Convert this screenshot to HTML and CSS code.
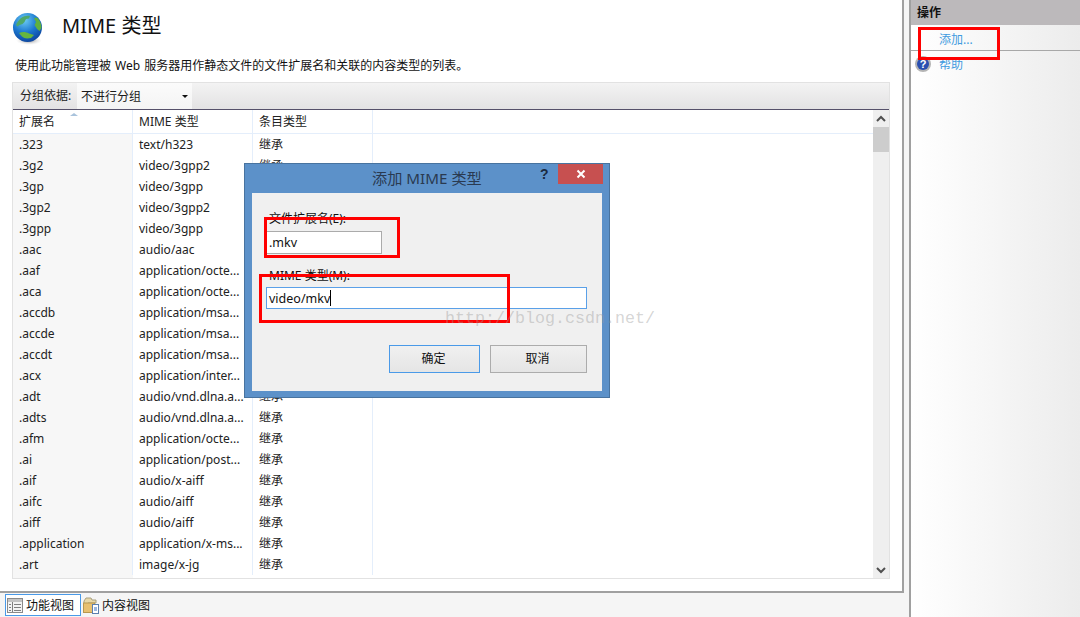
FILE: index.html
```html
<!DOCTYPE html>
<html lang="zh-CN">
<head>
<meta charset="utf-8">
<title>MIME 类型</title>
<link rel="stylesheet" href="styles.css">
</head>
<body>
<div class="app">
  <div class="left">
    <main class="main">
      <header class="head">
        <svg class="globe" width="30" height="32" viewBox="0 0 30 32">
          <defs>
            <radialGradient id="sea" cx="0.4" cy="0.25" r="0.85">
              <stop offset="0" stop-color="#6ccbf2"/>
              <stop offset="0.5" stop-color="#1c78d0"/>
              <stop offset="1" stop-color="#0a3a94"/>
            </radialGradient>
            <radialGradient id="shadow" cx="0.5" cy="0.5" r="0.5">
              <stop offset="0" stop-color="#888"/>
              <stop offset="1" stop-color="#ddd" stop-opacity="0"/>
            </radialGradient>
          </defs>
          <ellipse cx="16" cy="27.500" rx="13" ry="4.500" fill="url(#shadow)"/>
          <circle cx="14.500" cy="14.500" r="14.500" fill="url(#sea)"/>
          <path d="M8 5c3-2 6-2.500 9-2l-1 2.500-3 .6-1.500 3-2 2-3 .9-2 1.500-1.500-1.500C4 9.500 6 6.500 8 5z" fill="#4fa86a"/>
          <path d="M21 5l3-.5c3 3 4.500 6.500 4.500 10.500l-2 3-2.500-2-2.500-4 1.500-3z" fill="#5fb03f"/>
          <path d="M6 20c3-1.500 7-1.500 10 .5l5 1.500-3 3c-4 1-7 .5-9-1.500z" fill="#66b53e"/>
        </svg>
        <h1 class="title">MIME 类型</h1>
      </header>
      <p class="desc">使用此功能管理被 Web 服务器用作静态文件的文件扩展名和关联的内容类型的列表。</p>
      <section class="panel">
        <div class="toolbar">
          <span class="group-label">分组依据:</span>
          <div class="select"><span>不进行分组</span><i class="caret"></i></div>
        </div>
        <div class="body">
          <div class="table">
            <div class="row header">
              <div class="cell first">扩展名<i class="sort"></i></div>
              <div class="cell">MIME 类型</div>
              <div class="cell">条目类型</div>
            </div>
            <div class="row"><div class="cell first">.323</div><div class="cell">text/h323</div><div class="cell">继承</div></div>
            <div class="row"><div class="cell first">.3g2</div><div class="cell">video/3gpp2</div><div class="cell">继承</div></div>
            <div class="row"><div class="cell first">.3gp</div><div class="cell">video/3gpp</div><div class="cell">继承</div></div>
            <div class="row"><div class="cell first">.3gp2</div><div class="cell">video/3gpp2</div><div class="cell">继承</div></div>
            <div class="row"><div class="cell first">.3gpp</div><div class="cell">video/3gpp</div><div class="cell">继承</div></div>
            <div class="row"><div class="cell first">.aac</div><div class="cell">audio/aac</div><div class="cell">继承</div></div>
            <div class="row"><div class="cell first">.aaf</div><div class="cell">application/octe...</div><div class="cell">继承</div></div>
            <div class="row"><div class="cell first">.aca</div><div class="cell">application/octe...</div><div class="cell">继承</div></div>
            <div class="row"><div class="cell first">.accdb</div><div class="cell">application/msa...</div><div class="cell">继承</div></div>
            <div class="row"><div class="cell first">.accde</div><div class="cell">application/msa...</div><div class="cell">继承</div></div>
            <div class="row"><div class="cell first">.accdt</div><div class="cell">application/msa...</div><div class="cell">继承</div></div>
            <div class="row"><div class="cell first">.acx</div><div class="cell">application/inter...</div><div class="cell">继承</div></div>
            <div class="row"><div class="cell first">.adt</div><div class="cell">audio/vnd.dlna.a...</div><div class="cell">继承</div></div>
            <div class="row"><div class="cell first">.adts</div><div class="cell">audio/vnd.dlna.a...</div><div class="cell">继承</div></div>
            <div class="row"><div class="cell first">.afm</div><div class="cell">application/octe...</div><div class="cell">继承</div></div>
            <div class="row"><div class="cell first">.ai</div><div class="cell">application/post...</div><div class="cell">继承</div></div>
            <div class="row"><div class="cell first">.aif</div><div class="cell">audio/x-aiff</div><div class="cell">继承</div></div>
            <div class="row"><div class="cell first">.aifc</div><div class="cell">audio/aiff</div><div class="cell">继承</div></div>
            <div class="row"><div class="cell first">.aiff</div><div class="cell">audio/aiff</div><div class="cell">继承</div></div>
            <div class="row"><div class="cell first">.application</div><div class="cell">application/x-ms...</div><div class="cell">继承</div></div>
            <div class="row"><div class="cell first">.art</div><div class="cell">image/x-jg</div><div class="cell">继承</div></div>
          </div>
          <div class="scrollbar">
            <svg class="arrow" width="16" height="17" viewBox="0 0 16 17"><path d="M4 11l4-4 4 4" fill="none" stroke="#505050" stroke-width="2"/></svg>
            <div class="thumb"></div>
            <div class="track"></div>
            <svg class="arrow" width="16" height="17" viewBox="0 0 16 17"><path d="M4 7l4 4 4-4" fill="none" stroke="#505050" stroke-width="2"/></svg>
          </div>
        </div>
      </section>
    </main>
    <footer class="tabs">
      <div class="tab active">
        <svg width="16" height="15" viewBox="0 0 16 15"><rect x="0.5" y="0.5" width="15" height="14" fill="#f4f4f4" stroke="#8a8a8a"/><rect x="1" y="1" width="14" height="3" fill="#c4c4c4"/><path d="M5.500 4v10M2 6.500h2M2 9.500h2M2 12.500h2M7 6.500h7M7 9.500h7M7 12.500h7" stroke="#808080"/></svg>
        <span>功能视图</span>
      </div>
      <div class="tab">
        <svg width="16" height="17" viewBox="0 0 16 17"><path d="M1 15V4l2-3h5l1 2h4v3H5z" fill="#e8d8a8" stroke="#a8a080"/><rect x="0.500" y="6" width="11" height="9.500" fill="#e8c070" stroke="#b89850"/><rect x="9.500" y="7.500" width="6" height="9" fill="#fff" stroke="#5a7fb0"/><path d="M11 11h3M11 13h3" stroke="#3a70c0"/></svg>
        <span>内容视图</span>
      </div>
    </footer>
  </div>
  <aside class="side">
    <div class="side-head">操作</div>
    <div class="side-item add">添加...</div>
    <div class="side-item help">
      <svg width="16" height="16" viewBox="0 0 16 16"><circle cx="8" cy="8" r="8" fill="#b4b4b4"/><circle cx="8" cy="8" r="6" fill="#2a4fb0"/><text x="8" y="12" text-anchor="middle" class="q">?</text></svg>
      <span>帮助</span>
    </div>
  </aside>
</div>

<div class="dialog">
  <div class="dlg-title">
    <span class="dlg-name">添加 MIME 类型</span>
    <span class="dlg-q">?</span>
    <span class="dlg-close">
      <svg width="10" height="10" viewBox="0 0 10 10"><path d="M1.500 1.500l7 7M8.500 1.500l-7 7" stroke="#fff" stroke-width="2"/></svg>
    </span>
  </div>
  <div class="dlg-body">
    <label class="field-label">文件扩展名(E):</label>
    <div class="input short">.mkv</div>
    <label class="field-label second">MIME 类型(M):</label>
    <div class="input focus">video/mkv<i class="cursor"></i></div>
    <div class="buttons">
      <div class="btn primary">确定</div>
      <div class="btn">取消</div>
    </div>
  </div>
</div>

<div class="mark m-add"></div>
<div class="mark m-ext"></div>
<div class="mark m-mime"></div>
<div class="watermark">http://blog.csdn.net/</div>
</body>
</html>
```
FILE: styles.css
```css
* { box-sizing: border-box; }
html, body { margin: 0; height: 100%; }
body {
  width: 1080px;
  height: 617px;
  overflow: hidden;
  position: relative;
  font-family: "Noto Sans", "Noto Sans CJK SC", sans-serif;
  font-size: 12px;
  color: #1a1a1a;
  background: #f5f5f5;
}
.app { display: flex; height: 617px; }
.left { width: 909px; display: flex; flex-direction: column; }
.main {
  width: 904px;
  height: 593px;
  background: #fff;
  border-right: 2px solid #a0a0a0;
  border-bottom: 2px solid #a0a0a0;
  padding: 0 13px 0 12px;
}
.head { display: flex; align-items: flex-start; height: 46px; padding-top: 13px; }
.globe { margin-left: 1px; flex: none; }
.title { margin: 0 0 0 19px; font-size: 20px; font-weight: 400; line-height: 26px; color: #111; }
.desc { margin: 10px 0 0 3px; font-size: 12px; line-height: 20px; height: 26px; color: #111; word-spacing: 1px; }
.panel { width: 878px; height: 497px; border: 1px solid #e2e2e2; }
.toolbar {
  height: 27px;
  display: flex;
  align-items: center;
  padding-left: 7px;
  background: linear-gradient(#f3f3f3, #e3e2e3);
  border-bottom: 1px solid #55506a;
}
.group-label { width: 57px; line-height: 26px; color: #222; }
.select {
  width: 115px;
  height: 26px;
  display: flex;
  align-items: center;
  justify-content: space-between;
  padding: 0 4px 0 4px;
  background: linear-gradient(#fbfbfb, #f4f4f4);
}
.caret { width: 0; height: 0; border: 3px solid transparent; border-top: 3px solid #111; margin-top: 3px; }
.body { display: flex; height: 468px; }
.table { width: 860px; background: linear-gradient(90deg, #f7f7f7 120px, #fff 120px); overflow: hidden; }
.row { display: flex; height: 21px; line-height: 21px; }
.row.header { height: 24px; line-height: 23px; border-bottom: 1px solid #e4eefb; background: #fff; }
.cell { width: 120px; padding-left: 6px; border-right: 1px solid #e4eefb; white-space: nowrap; color: #222; }
.first { position: relative; width: 120px; }
.sort {
  position: absolute; left: 57px; top: 3px; width: 0; height: 0;
  border: 4px solid transparent; border-top: 0; border-bottom: 3px solid #a9c3dc;
}
.scrollbar {
  width: 16px;
  margin-left: auto;
  display: flex;
  flex-direction: column;
  background: #efefef;
}
.arrow { flex: none; }
.thumb { height: 25px; background: #cdcdcd; flex: none; }
.track { flex: 1; }
.tabs { height: 24px; display: flex; align-items: center; padding: 0 0 0 5px; }
.tab { display: flex; align-items: center; gap: 3px; height: 22px; padding: 0 1px; border: 1px solid transparent; color: #111; }
.tab.active { border-color: #4a9ae8; background: #fff; width: 76px; }
.side {
  width: 171px;
  border-left: 2px solid #a0a0a0;
  background: linear-gradient(90deg, #ffffff, #ececec);
}
.side-head { height: 25px; line-height: 25px; padding-left: 6px; background: #bcb9bb; font-weight: 700; color: #111; }
.side-item { height: 26px; display: flex; align-items: center; color: #3f9be0; }
.add { padding: 2px 0 0 28px; border-bottom: 1px solid #a8a8a8; }
.help { height: 26px; margin-top: 0; padding-left: 4px; gap: 8px; }
.q { font: 700 11px "Liberation Sans", sans-serif; fill: #fff; }

.dialog {
  position: absolute;
  left: 244px;
  top: 163px;
  width: 366px;
  height: 235px;
  background: #5c91c9;
  border: 1px solid #48739f;
  padding: 0 7px 6px 7px;
  display: flex;
  flex-direction: column;
}
.dlg-title { height: 29px; position: relative; flex: none; }
.dlg-name { position: absolute; left: 120px; top: 3px; font-size: 15.2px; line-height: 22px; color: #2a3a50; white-space: nowrap; }
.dlg-q { position: absolute; left: 288px; top: -1px; font: 700 14px/22px "Liberation Sans", sans-serif; color: #1a2a40; }
.dlg-close {
  position: absolute; right: -1px; top: 0; width: 45px; height: 20px;
  background: #c75050; display: flex; align-items: center; justify-content: center;
}
.dlg-body { flex: 1; background: #f0f0f0; padding: 17px 15px 0 14px; }
.field-label { display: block; height: 18px; line-height: 18px; margin-left: 3px; color: #111; white-space: nowrap; }
.second { margin-top: 13px; }
.input {
  height: 23px;
  line-height: 21px;
  padding-left: 2px;
  background: #fff;
  border: 1px solid #ababab;
  font-size: 12.5px;
  color: #111;
  margin-top: 3px;
}
.short { width: 116px; }
.focus { width: 321px; height: 22px; margin-top: 2px; border-color: #5aa0e8; display: flex; align-items: center; }
.cursor { width: 1px; height: 16px; background: #000; }
.buttons { display: flex; justify-content: flex-end; gap: 10px; margin-top: 36px; }
.btn {
  width: 91px;
  height: 28px;
  line-height: 25px;
  text-align: center;
  color: #111;
  border: 1px solid #acacac;
  background: linear-gradient(#f0f0f0, #e5e5e5);
}
.btn.primary { border-color: #4a9ae8; padding-right: 2px; }
.btn + .btn { width: 97px; padding-right: 2px; }

.mark { position: absolute; border: 3px solid #ff0000; pointer-events: none; }
.m-add { left: 918px; top: 27px; width: 82px; height: 33px; }
.m-ext { left: 264px; top: 217px; width: 136px; height: 41px; }
.m-mime { left: 259px; top: 274px; width: 251px; height: 49px; }
.watermark {
  position: absolute;
  left: 445px;
  top: 308px;
  font: 16.67px/22px "Liberation Mono", monospace;
  color: rgba(150, 150, 150, 0.4);
  white-space: nowrap;
}
```
